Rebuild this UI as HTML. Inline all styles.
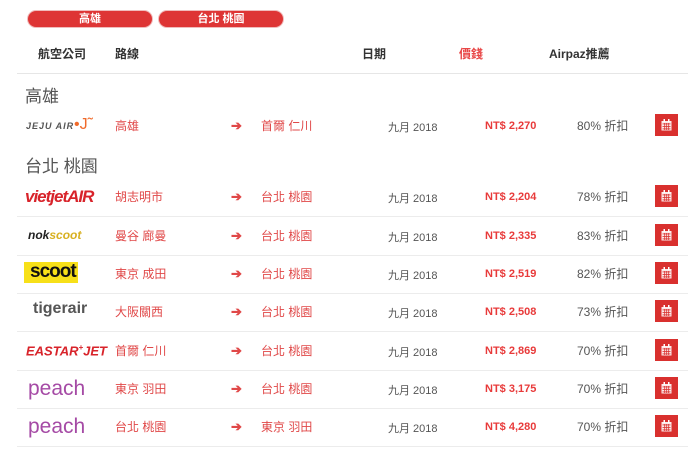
<!DOCTYPE html>
<html><head><meta charset="utf-8"><style>
body{margin:0;width:696px;height:456px;background:#fff;position:relative;overflow:hidden;font-family:"Liberation Sans","Noto Sans CJK TC",sans-serif;}
.a{position:absolute;white-space:nowrap}
.tab{position:absolute;top:11px;height:16px;background:#de3535;border-radius:8px;color:#fff;font-size:11px;font-weight:bold;text-align:center;line-height:16px;box-shadow:0 0 0 1px #f0bcbc}
.h{position:absolute;top:45px;font-size:12px;color:#333;font-weight:bold}
.line{position:absolute;left:17px;width:671px;height:1px;background:#e6e6e6}
.r{position:absolute;font-size:12px;color:#e04848}
.d{position:absolute;font-size:11px;color:#555}
.p{position:absolute;font-size:11px;color:#e83a3a;font-weight:bold}
.c{position:absolute;font-size:12px;color:#555}
.cal{position:absolute;left:655px;width:23px;height:22px;background:#d9302e}
.cal svg{position:absolute;left:6px;top:5px}
.sec{position:absolute;left:25px;font-size:17px;color:#555}
</style></head><body>
<div class="tab" style="left:28px;width:124px">高雄</div>
<div class="tab" style="left:159px;width:124px">台北 桃園</div>
<div class="h" style="left:38px">航空公司</div>
<div class="h" style="left:115px">路線</div>
<div class="h" style="left:362px">日期</div>
<div class="h" style="left:459px;color:#e84545">價錢</div>
<div class="h" style="left:549px">Airpaz推薦</div>
<div class="line" style="top:73px"></div>
<div class="sec" style="top:82px">高雄</div>
<div class="sec" style="top:152px">台北 桃園</div>

<!-- logos -->
<div class="a" style="left:26px;top:121px;font-size:9px;font-weight:bold;font-style:italic;color:#555;letter-spacing:1px">JEJU AIR</div>
<div class="a" style="left:74px;top:116px;font-size:16px;color:#f06a2a">•J˜</div>
<div class="a" style="left:25px;top:187px;font-size:17px;font-weight:bold;font-style:italic;color:#d8232a;letter-spacing:-1px">vietjetAIR</div>
<div class="a" style="left:28px;top:228px;font-size:12px;font-weight:bold;font-style:italic;color:#222">nok<span style="color:#d8b020">scoot</span></div>
<div class="a" style="left:24px;top:262px;width:54px;height:21px;background:#f7e019"></div>
<div class="a" style="left:30px;top:261px;font-size:19px;font-weight:bold;color:#111;letter-spacing:-1px">scoot</div>
<div class="a" style="left:33px;top:300px;font-size:16px;font-weight:bold;color:#555">tigerair</div>
<div class="a" style="left:26px;top:343px;font-size:13px;font-weight:bold;font-style:italic;color:#d8232a">EASTAR<sup style="font-size:8px">+</sup>JET</div>
<div class="a" style="left:28px;top:377px;font-size:21px;color:#a54aa5">peach</div>
<div class="a" style="left:28px;top:415px;font-size:21px;color:#a54aa5">peach</div>

<div id="rows"></div>
<script>
var R=[[125,"高雄","首爾 仁川","NT$ 2,270","80%"],[196,"胡志明市","台北 桃園","NT$ 2,204","78%"],[235,"曼谷 廊曼","台北 桃園","NT$ 2,335","83%"],[273,"東京 成田","台北 桃園","NT$ 2,519","82%"],[311,"大阪關西","台北 桃園","NT$ 2,508","73%"],[350,"首爾 仁川","台北 桃園","NT$ 2,869","70%"],[388,"東京 羽田","台北 桃園","NT$ 3,175","70%"],[426,"台北 桃園","東京 羽田","NT$ 4,280","70%"]];
var h="";
R.forEach(function(r,i){var y=r[0];
h+='<div class="r" style="left:115px;top:'+(y-8)+'px">'+r[1]+'</div>';
h+='<div class="r" style="left:231px;top:'+(y-7)+'px;font-weight:bold;font-size:13px">➔</div>';
h+='<div class="r" style="left:261px;top:'+(y-8)+'px">'+r[2]+'</div>';
h+='<div class="d" style="left:388px;top:'+(y-6)+'px">九月 2018</div>';
h+='<div class="p" style="left:485px;top:'+(y-5)+'px">'+r[3]+'</div>';
h+='<div class="c" style="left:577px;top:'+(y-8)+'px">'+r[4]+' 折扣</div>';
h+='<div class="cal" style="top:'+(y-11)+'px"><svg width="11" height="12" viewBox="0 0 11 12"><rect x="0.5" y="2" width="10" height="9.5" fill="#fff" opacity=".9"/><rect x="2.5" y="0" width="1.5" height="3" fill="#fff"/><rect x="7" y="0" width="1.5" height="3" fill="#fff"/><g fill="#d9302e"><rect x="1.5" y="4.5" width="8" height=".8"/><rect x="1.5" y="7" width="8" height=".8"/><rect x="1.5" y="9.5" width="8" height=".8"/><rect x="3.3" y="4" width=".8" height="7"/><rect x="5.3" y="4" width=".8" height="7"/><rect x="7.3" y="4" width=".8" height="7"/></g></svg></div>';
if(i>0)h+='<div class="line" style="top:'+(y+20)+'px;background:#ececec"></div>';
});
document.getElementById("rows").innerHTML=h;
</script>
</body></html>
